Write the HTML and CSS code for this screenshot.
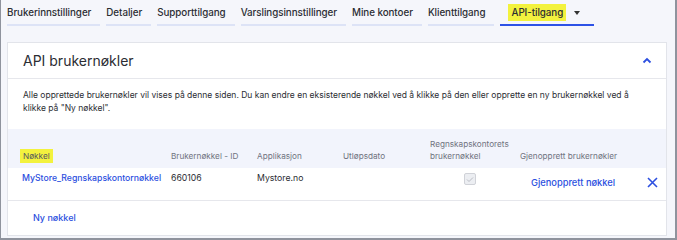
FILE: index.html
```html
<!DOCTYPE html>
<html lang="no">
<head>
<meta charset="utf-8">
<link rel="stylesheet" href="styles.css">
</head>
<body>
<div class="frame">
  <nav class="tabs">
    <a class="tab">Brukerinnstillinger</a>
    <a class="tab">Detaljer</a>
    <a class="tab">Supporttilgang</a>
    <a class="tab">Varslingsinnstillinger</a>
    <a class="tab">Mine kontoer</a>
    <a class="tab">Klienttilgang</a>
    <a class="tab active"><span class="hl">API-tilgang</span><span class="caret"></span></a>
  </nav>
  <section class="card">
    <header class="card-head">
      <h2>API brukernøkler</h2>
      <svg class="chev" width="10" height="7" viewBox="0 0 10 7"><path d="M1.5 5.5 L5 2 L8.5 5.5" fill="none" stroke="#2c4fe0" stroke-width="1.8"/></svg>
    </header>
    <p class="desc">Alle opprettede brukernøkler vil vises på denne siden. Du kan endre en eksisterende nøkkel ved å klikke på den eller opprette en ny brukernøkkel ved å klikke på "Ny nøkkel".</p>
    <div class="table">
      <div class="thead">
        <div class="c1"><span class="hl">Nøkkel</span></div>
        <div class="c2">Brukernøkkel - ID</div>
        <div class="c3">Applikasjon</div>
        <div class="c4">Utløpsdato</div>
        <div class="c5">Regnskapskontorets<br>brukernøkkel</div>
        <div class="c6">Gjenopprett brukernøkler</div>
        <div class="c7"></div>
      </div>
      <div class="trow">
        <div class="c1 link">MyStore_Regnskapskontornøkkel</div>
        <div class="c2">660106</div>
        <div class="c3">Mystore.no</div>
        <div class="c4"></div>
        <div class="c5 center"><span class="chk"><svg width="8" height="7" viewBox="0 0 8 7"><path d="M1 3.5 L3 5.5 L7 1.5" fill="none" stroke="#b9bcc4" stroke-width="1"/></svg></span></div>
        <div class="c6 restore">Gjenopprett nøkkel</div>
        <div class="c7"><svg width="11" height="11" viewBox="0 0 11 11"><path d="M1 1 L10 10 M10 1 L1 10" stroke="#2c4fe0" stroke-width="1.6"/></svg></div>
      </div>
    </div>
    <div class="card-foot"><a class="link new">Ny nøkkel</a></div>
  </section>
</div>
</body>
</html>
```
FILE: styles.css
```css
* { box-sizing: border-box; }
html, body { margin: 0; padding: 0; }
body { width: 677px; height: 240px; overflow: hidden; font-family: "Inter", "Noto Sans", sans-serif; color: #2b2d33; }
.frame {
  width: 677px; height: 240px;
  background: #f5f6fb;
  border-left: 1px solid #8f939d;
  border-right: 2px solid #8f939d;
  border-bottom: 2px solid #8f939d;
  padding: 0 8px 0 6px;
}
.tabs { display: flex; gap: 6px; padding-top: 4px; height: 26px; }
.tab {
  font-size: 9.8px; font-weight: 500; color: #2b2d33;
  padding: 0 9px 3px 0;
  border-bottom: 2px solid #dde3f6;
  height: 22px; display: flex; align-items: center;
  letter-spacing: -0.05px;
}
.tab.active { border-bottom-color: #2d52e6; padding-left: 8px; padding-right: 14px; }
.tab .hl { background: #f3f23e; padding: 3px 3px; }
.caret { display: inline-block; width: 0; height: 0; border-left: 3.5px solid transparent; border-right: 3.5px solid transparent; border-top: 4px solid #333; margin-left: 8px; }
.card {
  margin-top: 16px;
  background: #fff;
  border: 1px solid #e2e4ea;
  height: 194px;
}
.card-head { display: flex; align-items: center; justify-content: space-between; height: 36px; padding: 0 14px 0 15px; border-bottom: 1px solid #e6e7ec; }
.card-head h2 { margin: 0; font-size: 14px; font-weight: 400; color: #2b2d33; }
.desc { margin: 0; padding: 10px 15px 14px; font-size: 8.5px; line-height: 13px; color: #2b2d33; height: 50px; }
.thead, .trow { display: grid; grid-template-columns: 149px 86px 86px 87px 90px 116px 1fr; padding-left: 14px; }
.thead { background: #f2f4fc; height: 39px; align-items: end; padding-bottom: 6px; font-size: 8.2px; color: #707380; line-height: 12px; }
.thead .hl { background: #f3f23e; padding: 2px 3px; color: #55575f; margin-left: -2px; }
.trow { height: 33px; align-items: start; padding-top: 5px; font-size: 8.7px; border-bottom: 1px solid #e6e7ec; }
.center { display: flex; justify-content: center; padding-right: 10px; }
.chk { width: 12px; height: 12px; border: 1px solid #d0d2d8; background: #eceef2; border-radius: 2px; display: flex; align-items: center; justify-content: center; margin-top: 0; }
.link { color: #2c4fe0; font-weight: 500; }
.restore { color: #2c4fe0; font-weight: 500; font-size: 9.3px; padding-left: 11px; margin-top: 4px; }
.c7 { display: flex; justify-content: flex-start; padding-left: 11px; margin-top: 4px; }
.card-foot { padding: 11px 25px; font-size: 9px; }
.new { font-weight: 500; }
```
